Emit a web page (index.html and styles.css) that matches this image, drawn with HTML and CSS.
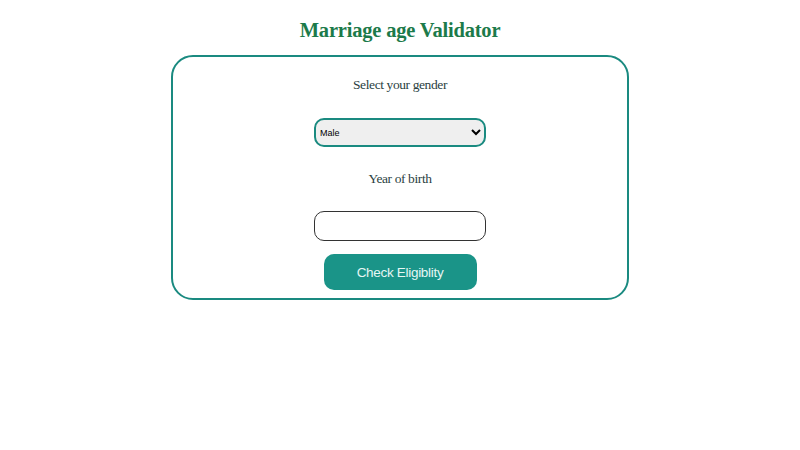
FILE: index.html
```html
<!DOCTYPE html>
<html>
<head>
<meta charset="utf-8">
<link rel="stylesheet" href="styles.css">
</head>
<body>
<h1 class="title">Marriage age Validator</h1>
<div class="card">
  <p class="label">Select your gender</p>
  <select class="gender">
    <option>Male</option>
    <option>Female</option>
  </select>
  <p class="label label-year">Year of birth</p>
  <input class="year" type="text">
  <button class="check">Check Eligiblity</button>
</div>
</body>
</html>
```

FILE: styles.css
```css
html, body {
  margin: 0;
  padding: 0;
  background: #ffffff;
}
body {
  font-family: "Liberation Serif", "Times New Roman", serif;
  display: flex;
  flex-direction: column;
  align-items: center;
}
.title {
  margin: 17px 0 0 0;
  font-size: 20.5px;
  line-height: 26px;
  letter-spacing: -0.2px;
  font-weight: bold;
  color: #1c7a4a;
}
.card {
  margin-top: 12px;
  width: 458px;
  height: 245px;
  box-sizing: border-box;
  border: 2px solid #1a8a80;
  border-radius: 22px;
  display: flex;
  flex-direction: column;
  align-items: center;
  padding-top: 19px;
}
.label {
  margin: 0;
  font-size: 13.5px;
  line-height: 18px;
  letter-spacing: -0.4px;
  color: #2b3f3f;
}
.gender {
  margin-top: 24px;
  width: 172px;
  height: 29px;
  box-sizing: border-box;
  border: 2px solid #1a8a80;
  border-radius: 10px;
  background: #efefef;
  font-family: "Liberation Sans", Arial, sans-serif;
  font-size: 9px;
  color: #000;
  padding: 0;
}
.label-year {
  margin-top: 23px;
}
.year {
  margin-top: 23px;
  width: 172px;
  height: 30px;
  box-sizing: border-box;
  border: 1.5px solid #333;
  border-radius: 10px;
  background: #fff;
}
.check {
  margin-top: 13px;
  width: 153px;
  height: 36px;
  border: none;
  border-radius: 10px;
  background: #1a9488;
  color: #e6f6f4;
  font-family: "Liberation Sans", Arial, sans-serif;
  font-size: 13.5px;
  letter-spacing: -0.3px;
}
```
